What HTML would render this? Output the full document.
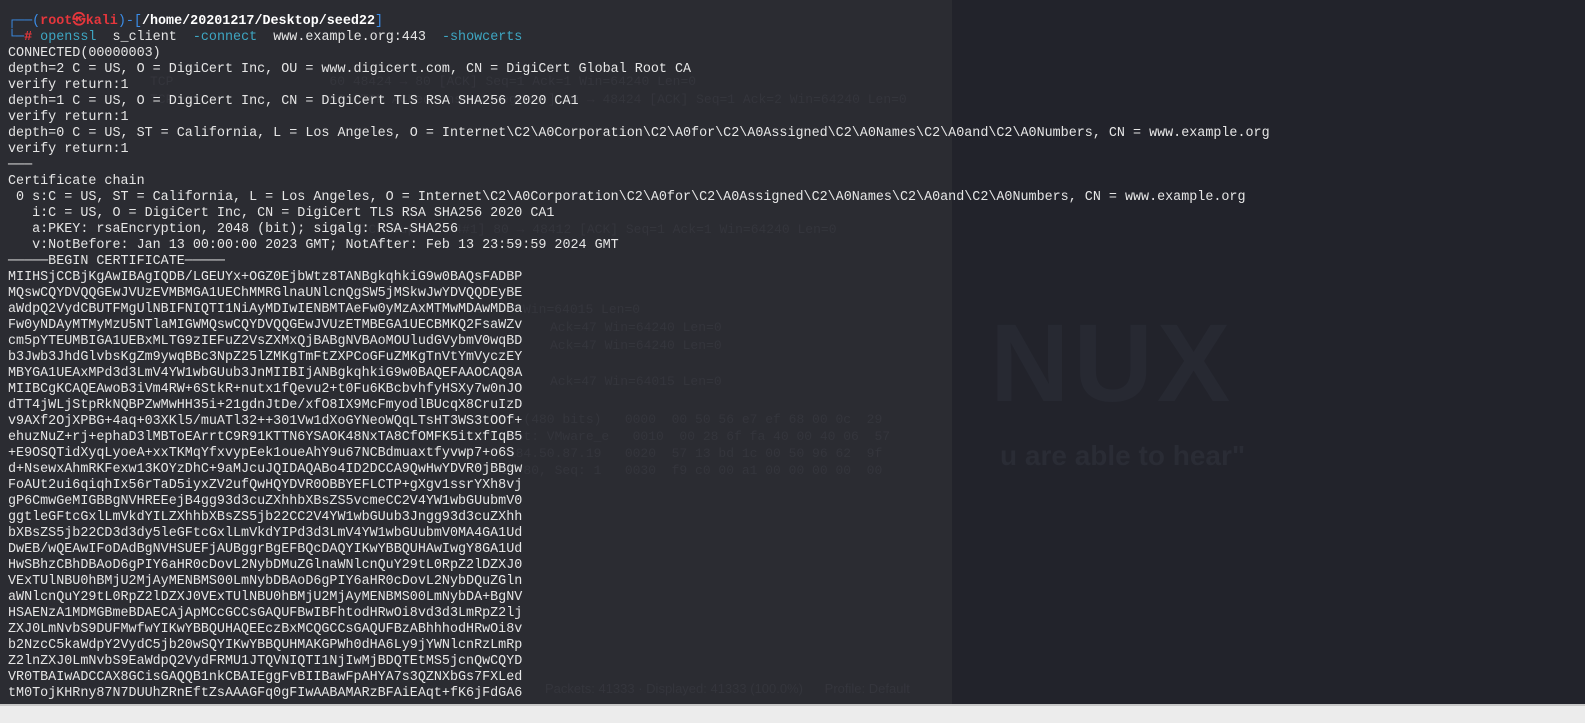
<!DOCTYPE html>
<html><head><meta charset="utf-8"><style>
html,body{margin:0;padding:0;width:1585px;height:721px;overflow:hidden;background:#23242c;}
#wsbg{position:absolute;left:0;top:0;width:952px;height:704px;background:#2b2c32;}
#right{position:absolute;left:952px;top:0;width:633px;height:704px;background:#22232b;}
.bgtxt{position:absolute;font-family:"Liberation Mono",monospace;font-size:13px;color:#34353c;white-space:pre;}
#logo{position:absolute;left:990px;top:300px;font-family:"Liberation Sans",sans-serif;font-weight:bold;font-size:110px;color:#272932;letter-spacing:4px;}
#logo2{position:absolute;left:1000px;top:440px;font-family:"Liberation Sans",sans-serif;font-weight:bold;font-size:28px;color:#2a2c35;}
#term{position:absolute;left:8px;top:14px;font-family:"Liberation Mono","DejaVu Sans Mono",monospace;font-size:13.4px;line-height:16px;color:#e6e6e6;white-space:pre;}
.b{color:#3b8eea}.r{color:#e5363c;font-weight:bold}.w{color:#fff;font-weight:bold}.c{color:#3ea6c2}
.bot{position:absolute;left:0;top:704px;width:1585px;height:17px;background:#ececec;border-top:2px solid #c8c8c8;}
</style></head><body>
<div id="wsbg"></div><div id="right"></div>
<div class="bgtxt" style="left:150px;top:74px">TCP                    60 48424 → 80 [ACK] Seq=1 Ack=1 Win=64240 Len=0</div>
<div class="bgtxt" style="left:150px;top:92px">TCP                    60 [TCP ACKed unseen segment] 80 → 48424 [ACK] Seq=1 Ack=2 Win=64240 Len=0</div>
<div class="bgtxt" style="left:150px;top:222px">TCP                    60 [TCP Dup ACK 4#1] 80 → 48412 [ACK] Seq=1 Ack=1 Win=64240 Len=0</div>
<div class="bgtxt" style="left:250px;top:302px">60 47000 → 443 [ACK] Seq=47 Ack=47 Win=64015 Len=0</div>
<div class="bgtxt" style="left:550px;top:320px">Ack=47 Win=64240 Len=0</div>
<div class="bgtxt" style="left:550px;top:338px">Ack=47 Win=64240 Len=0</div>
<div class="bgtxt" style="left:550px;top:374px">Ack=47 Win=64015 Len=0</div>
<div class="bgtxt" style="left:500px;top:412px">ed (480 bits)   0000  00 50 56 e7 ef 68 00 0c  29</div>
<div class="bgtxt" style="left:500px;top:429px"> Dst: VMware_e   0010  00 28 6f fa 40 00 40 06  57</div>
<div class="bgtxt" style="left:500px;top:446px"> 184.50.87.19   0020  57 13 bd 1c 00 50 96 62  9f</div>
<div class="bgtxt" style="left:500px;top:463px">t: 80, Seq: 1   0030  f9 c0 00 a1 00 00 00 00  00</div>
<div class="bgtxt" style="left:545px;top:681px;font-family:'Liberation Sans',sans-serif">Packets: 41333 · Displayed: 41333 (100.0%)      Profile: Default</div>
<div id="logo">NUX</div>
<div id="logo2">u are able to hear"</div>
<div id="term"><span class="b">┌──(</span><span class="r">root㉿kali</span><span class="b">)-[</span><span class="w">/home/20201217/Desktop/seed22</span><span class="b">]</span>
<span class="b">└─</span><span class="r">#</span> <span class="c">openssl</span>  s_client  <span class="c">-connect</span>  www.example.org:443  <span class="c">-showcerts</span>
CONNECTED(00000003)
depth=2 C = US, O = DigiCert Inc, OU = www.digicert.com, CN = DigiCert Global Root CA
verify return:1
depth=1 C = US, O = DigiCert Inc, CN = DigiCert TLS RSA SHA256 2020 CA1
verify return:1
depth=0 C = US, ST = California, L = Los Angeles, O = Internet\C2\A0Corporation\C2\A0for\C2\A0Assigned\C2\A0Names\C2\A0and\C2\A0Numbers, CN = www.example.org
verify return:1
───
Certificate chain
 0 s:C = US, ST = California, L = Los Angeles, O = Internet\C2\A0Corporation\C2\A0for\C2\A0Assigned\C2\A0Names\C2\A0and\C2\A0Numbers, CN = www.example.org
   i:C = US, O = DigiCert Inc, CN = DigiCert TLS RSA SHA256 2020 CA1
   a:PKEY: rsaEncryption, 2048 (bit); sigalg: RSA-SHA256
   v:NotBefore: Jan 13 00:00:00 2023 GMT; NotAfter: Feb 13 23:59:59 2024 GMT
─────BEGIN CERTIFICATE─────
MIIHSjCCBjKgAwIBAgIQDB/LGEUYx+OGZ0EjbWtz8TANBgkqhkiG9w0BAQsFADBP
MQswCQYDVQQGEwJVUzEVMBMGA1UEChMMRGlnaUNlcnQgSW5jMSkwJwYDVQQDEyBE
aWdpQ2VydCBUTFMgUlNBIFNIQTI1NiAyMDIwIENBMTAeFw0yMzAxMTMwMDAwMDBa
Fw0yNDAyMTMyMzU5NTlaMIGWMQswCQYDVQQGEwJVUzETMBEGA1UECBMKQ2FsaWZv
cm5pYTEUMBIGA1UEBxMLTG9zIEFuZ2VsZXMxQjBABgNVBAoMOUludGVybmV0wqBD
b3Jwb3JhdGlvbsKgZm9ywqBBc3NpZ25lZMKgTmFtZXPCoGFuZMKgTnVtYmVyczEY
MBYGA1UEAxMPd3d3LmV4YW1wbGUub3JnMIIBIjANBgkqhkiG9w0BAQEFAAOCAQ8A
MIIBCgKCAQEAwoB3iVm4RW+6StkR+nutx1fQevu2+t0Fu6KBcbvhfyHSXy7w0nJO
dTT4jWLjStpRkNQBPZwMwHH35i+21gdnJtDe/xfO8IX9McFmyodlBUcqX8CruIzD
v9AXf2OjXPBG+4aq+03XKl5/muATl32++301Vw1dXoGYNeoWQqLTsHT3WS3tOOf+
ehuzNuZ+rj+ephaD3lMBToEArrtC9R91KTTN6YSAOK48NxTA8CfOMFK5itxfIqB5
+E9OSQTidXyqLyoeA+xxTKMqYfxvypEek1oueAhY9u67NCBdmuaxtfyvwp7+o6S
d+NsewxAhmRKFexw13KOYzDhC+9aMJcuJQIDAQABo4ID2DCCA9QwHwYDVR0jBBgw
FoAUt2ui6qiqhIx56rTaD5iyxZV2ufQwHQYDVR0OBBYEFLCTP+gXgv1ssrYXh8vj
gP6CmwGeMIGBBgNVHREEejB4gg93d3cuZXhhbXBsZS5vcmeCC2V4YW1wbGUubmV0
ggtleGFtcGxlLmVkdYILZXhhbXBsZS5jb22CC2V4YW1wbGUub3Jngg93d3cuZXhh
bXBsZS5jb22CD3d3dy5leGFtcGxlLmVkdYIPd3d3LmV4YW1wbGUubmV0MA4GA1Ud
DwEB/wQEAwIFoDAdBgNVHSUEFjAUBggrBgEFBQcDAQYIKwYBBQUHAwIwgY8GA1Ud
HwSBhzCBhDBAoD6gPIY6aHR0cDovL2NybDMuZGlnaWNlcnQuY29tL0RpZ2lDZXJ0
VExTUlNBU0hBMjU2MjAyMENBMS00LmNybDBAoD6gPIY6aHR0cDovL2NybDQuZGln
aWNlcnQuY29tL0RpZ2lDZXJ0VExTUlNBU0hBMjU2MjAyMENBMS00LmNybDA+BgNV
HSAENzA1MDMGBmeBDAECAjApMCcGCCsGAQUFBwIBFhtodHRwOi8vd3d3LmRpZ2lj
ZXJ0LmNvbS9DUFMwfwYIKwYBBQUHAQEEczBxMCQGCCsGAQUFBzABhhhodHRwOi8v
b2NzcC5kaWdpY2VydC5jb20wSQYIKwYBBQUHMAKGPWh0dHA6Ly9jYWNlcnRzLmRp
Z2lnZXJ0LmNvbS9EaWdpQ2VydFRMU1JTQVNIQTI1NjIwMjBDQTEtMS5jcnQwCQYD
VR0TBAIwADCCAX8GCisGAQQB1nkCBAIEggFvBIIBawFpAHYA7s3QZNXbGs7FXLed
tM0TojKHRny87N7DUUhZRnEftZsAAAGFq0gFIwAABAMARzBFAiEAqt+fK6jFdGA6</div>
<div class="bot"></div>
</body></html>
